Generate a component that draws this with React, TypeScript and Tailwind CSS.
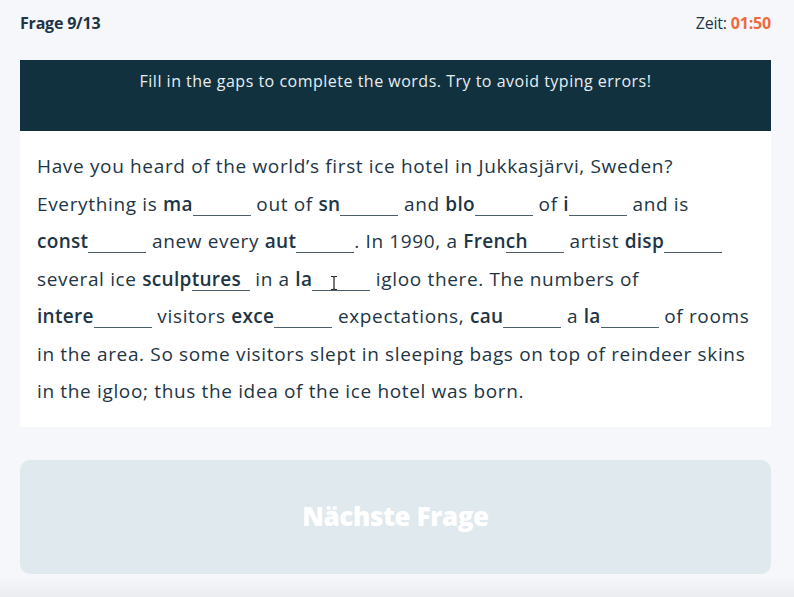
import React from "react";

type Part = { t: string; b?: boolean } | { gap: string; cursor?: boolean };

const LINES: Part[][] = [
  [{ t: "Have you heard of the world’s first ice hotel in Jukkasjärvi, Sweden?" }],
  [
    { t: "Everything is " },
    { t: "ma", b: true },
    { gap: "" },
    { t: " out of " },
    { t: "sn", b: true },
    { gap: "" },
    { t: " and " },
    { t: "blo", b: true },
    { gap: "" },
    { t: " of " },
    { t: "i", b: true },
    { gap: "" },
    { t: " and is" },
  ],
  [
    { t: "const", b: true },
    { gap: "" },
    { t: " anew every " },
    { t: "aut", b: true },
    { gap: "" },
    { t: ". In 1990, a " },
    { t: "Fren", b: true },
    { gap: "ch" },
    { t: " artist " },
    { t: "disp", b: true },
    { gap: "" },
  ],
  [
    { t: "several ice " },
    { t: "sculp", b: true },
    { gap: "tures" },
    { t: " in a " },
    { t: "la", b: true },
    { gap: "", cursor: true },
    { t: " igloo there. The numbers of" },
  ],
  [
    { t: "intere", b: true },
    { gap: "" },
    { t: " visitors " },
    { t: "exce", b: true },
    { gap: "" },
    { t: " expectations, " },
    { t: "cau", b: true },
    { gap: "" },
    { t: " a " },
    { t: "la", b: true },
    { gap: "" },
    { t: " of rooms" },
  ],
  [{ t: "in the area. So some visitors slept in sleeping bags on top of reindeer skins" }],
  [{ t: "in the igloo; thus the idea of the ice hotel was born." }],
];

function Gap({ value, cursor }: { value: string; cursor?: boolean }) {
  return (
    <span className="relative inline-block w-[58px] border-b border-[#4a5d68] leading-[21px] font-semibold tracking-[0.3px] align-baseline">
      {value || "\u00a0"}
      {cursor && (
        <svg
          className="absolute left-[18px] top-[6px]"
          width="8"
          height="16"
          viewBox="0 0 8 16"
          fill="none"
          stroke="#222"
          strokeWidth="1.2"
        >
          <path d="M1 1.5h2.2L4 2.5l0.8-1H7M4 2.5v11M1 14.5h2.2l0.8-1 0.8 1H7" />
        </svg>
      )}
    </span>
  );
}

export default function App() {
  return (
    <div
      className="w-[794px] h-[597px] overflow-hidden bg-[#f5f7fa] text-[#1d3545] flex flex-col [font-variant-ligatures:none]"
      style={{ fontFamily: "'Open Sans', 'Noto Sans', sans-serif" }}
    >
      <div className="h-[60px] flex items-start justify-between pl-5 pr-[23px] pt-[11px]">
        <div className="text-[16px] font-bold tracking-[-0.2px]">Frage 9/13</div>
        <div className="text-[16px] tracking-[-0.2px]">
          Zeit: <span className="font-bold text-[#ee6a3c]">01:50</span>
        </div>
      </div>

      <div className="pl-5 pr-[23px]">
        <div className="h-[71px] bg-[#12313f] text-[#e8eef1] text-[16px] text-center pt-[9px] tracking-[0.5px]">
          Fill in the gaps to complete the words. Try to avoid typing errors!
        </div>
        <div className="bg-white pl-[17px] pr-4 pt-[17px] pb-[16px] text-[19px] leading-[37.5px] tracking-[0.65px]">
          {LINES.map((line, i) => (
            <div key={i} className="whitespace-pre">
              {line.map((p, j) =>
                "gap" in p ? (
                  <Gap key={j} value={p.gap} cursor={p.cursor} />
                ) : (
                  <span key={j} className={p.b ? "font-semibold tracking-[0.3px]" : ""}>
                    {p.t}
                  </span>
                )
              )}
            </div>
          ))}
        </div>
      </div>

      <div className="pl-5 pr-[23px] pt-[33px]">
        <button className="w-full h-[114px] rounded-[10px] bg-[#e0e9ed] text-white text-[26px] font-extrabold tracking-[-0.4px]">
          Nächste Frage
        </button>
      </div>

      <div className="flex-1" />
      <div className="h-[20px] bg-gradient-to-b from-[#f5f7fa] to-[#eaecef]" />
    </div>
  );
}
